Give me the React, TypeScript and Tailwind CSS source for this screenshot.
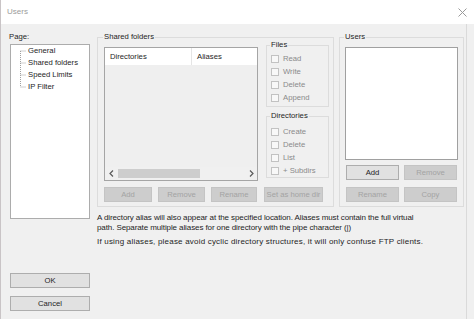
import type { ReactNode } from 'react'

function Btn({ children, disabled, className = '' }: { children: ReactNode; disabled?: boolean; className?: string }) {
  return (
    <div
      className={`flex h-[15px] shrink-0 items-center justify-center border ${
        disabled ? 'border-[#c4c4c4] bg-[#cdcdcd] text-[#a3a3a3]' : 'border-[#adadad] bg-[#e1e1e1] text-[#1e1e1e]'
      } ${className}`}
    >
      {children}
    </div>
  )
}

function Check({ label }: { label: string }) {
  return (
    <div className="flex h-[13px] items-center">
      <span className="h-[8px] w-[8px] border border-[#c2c2c2] bg-[#f8f8f8]" />
      <span className="ml-[4px] text-[#8a8a8a]">{label}</span>
    </div>
  )
}

function Chevron({ right }: { right?: boolean }) {
  return (
    <svg width="5" height="7" viewBox="0 0 5 7">
      <path d={right ? 'M1 0.5 L4 3.5 L1 6.5' : 'M4 0.5 L1 3.5 L4 6.5'} fill="none" stroke="#5a5a5a" strokeWidth="1.2" />
    </svg>
  )
}

export default function App() {
  return (
    <div className="flex h-[319px] w-[474px] flex-col overflow-hidden border-l border-[#c9c4c6] bg-[#f0f0f0] font-['Liberation_Sans',Arial,sans-serif] text-[7.7px] leading-[10px] text-[#1e1e1e]">
      {/* title bar */}
      <div className="flex h-[24px] shrink-0 items-center justify-between bg-white pl-[6px] pr-[7px]">
        <span className="text-[8px] text-[#9b9b9b]">Users</span>
        <svg width="9" height="9" viewBox="0 0 9 9">
          <path d="M0.5 0.5 L8.5 8.5 M8.5 0.5 L0.5 8.5" stroke="#9a9a9a" strokeWidth="1" />
        </svg>
      </div>

      <div className="flex flex-1">
        {/* left column */}
        <div className="flex w-[96px] shrink-0 flex-col pb-[8px] pl-[8px] pt-[8px]">
          <div>Page:</div>
          <div className="ml-[1px] mt-[2px] flex h-[175px] w-[80px] border border-[#acacac] bg-white">
            <svg width="17" height="48" viewBox="0 0 17 48" className="shrink-0">
              <path
                d="M9.5 6 V42 M9.5 6 H15 M9.5 18 H15 M9.5 30 H15 M9.5 42 H15"
                fill="none"
                stroke="#a0a0a0"
                strokeWidth="1"
                strokeDasharray="1 1"
              />
            </svg>
            <div className="flex flex-col leading-[12px]">
              <span>General</span>
              <span>Shared folders</span>
              <span>Speed Limits</span>
              <span>IP Filter</span>
            </div>
          </div>
          <div className="mt-auto">
            <Btn className="ml-[1px] w-[80px]">OK</Btn>
            <Btn className="ml-[1px] mt-[8px] w-[80px]">Cancel</Btn>
          </div>
        </div>

        {/* main area */}
        <div className="flex w-[369px] shrink-0 flex-col pt-[8px]">
          <div className="flex items-start gap-[5px]">
            {/* shared folders */}
            <fieldset className="w-[237px] border border-[#dcdcdc] pb-[4px] pl-[6px] pr-[4px]">
              <legend className="-ml-[1px] px-[1px]">Shared folders</legend>
              <div className="flex items-start">
                <div className="mt-[5px] flex h-[134px] w-[154px] flex-col border border-[#a5a5a5] bg-[#efefef]">
                  <div className="flex h-[17px] shrink-0 items-center bg-white">
                    <div className="flex h-full w-[87px] items-center border-r border-[#e5e5e5] pl-[5px]">Directories</div>
                    <div className="pl-[5px]">Aliases</div>
                  </div>
                  <div className="flex-1" />
                  <div className="flex h-[13px] shrink-0 items-center bg-[#f0f0f0]">
                    <div className="flex w-[12px] justify-center">
                      <Chevron />
                    </div>
                    <div className="flex flex-1 items-center">
                      <div className="ml-[1px] h-[9px] w-[82px] bg-[#cdcdcd]" />
                    </div>
                    <div className="flex w-[12px] justify-center">
                      <Chevron right />
                    </div>
                  </div>
                </div>

                <div className="-mt-[2px] ml-[8px] w-[63px]">
                  <fieldset className="border border-[#dcdcdc] pb-[2px] pl-[4px]">
                    <legend className="-ml-[1px] px-[1px]">Files</legend>
                    <div className="pt-[2px]">
                      <Check label="Read" />
                      <Check label="Write" />
                      <Check label="Delete" />
                      <Check label="Append" />
                    </div>
                  </fieldset>
                  <fieldset className="mt-[4px] border border-[#dcdcdc] pl-[4px]">
                    <legend className="-ml-[1px] px-[1px]">Directories</legend>
                    <div className="pt-[4px]">
                      <Check label="Create" />
                      <Check label="Delete" />
                      <Check label="List" />
                      <Check label="+ Subdirs" />
                    </div>
                  </fieldset>
                </div>
              </div>
              <div className="mt-[6px] flex">
                <Btn disabled className="w-[48px]">Add</Btn>
                <Btn disabled className="ml-[6px] w-[47px]">Remove</Btn>
                <Btn disabled className="ml-[6px] w-[46px]">Rename</Btn>
                <Btn disabled className="ml-[7px] w-[59px]">Set as home dir</Btn>
              </div>
            </fieldset>

            {/* users */}
            <fieldset className="w-[125px] border border-[#dcdcdc] pb-[4px] pl-[5px] pr-[5px]">
              <legend className="-ml-[1px] px-[1px]">Users</legend>
              <div className="mt-[5px] h-[113px] w-[113px] border border-[#a0a0a0] bg-white" />
              <div className="mt-[5px] flex">
                <Btn className="ml-[1px] w-[53px]">Add</Btn>
                <Btn disabled className="ml-[5px] w-[53px]">Remove</Btn>
              </div>
              <div className="mt-[7px] flex">
                <Btn disabled className="ml-[1px] w-[53px]">Rename</Btn>
                <Btn disabled className="ml-[5px] w-[53px]">Copy</Btn>
              </div>
            </fieldset>
          </div>

          <div className="mt-[6px] whitespace-nowrap text-[8px] tracking-[-0.1px]">
            A directory alias will also appear at the specified location. Aliases must contain the full virtual
            <br />
            path. Separate multiple aliases for one directory with the pipe character (|)
          </div>
          <div className="mt-[4px] whitespace-nowrap text-[8px] tracking-[0.2px]">
            If using aliases, please avoid cyclic directory structures, it will only confuse FTP clients.
          </div>
        </div>

        {/* right edge */}
        <div className="w-[8px] shrink-0 border-l border-[#dadada]" />
      </div>
    </div>
  )
}
